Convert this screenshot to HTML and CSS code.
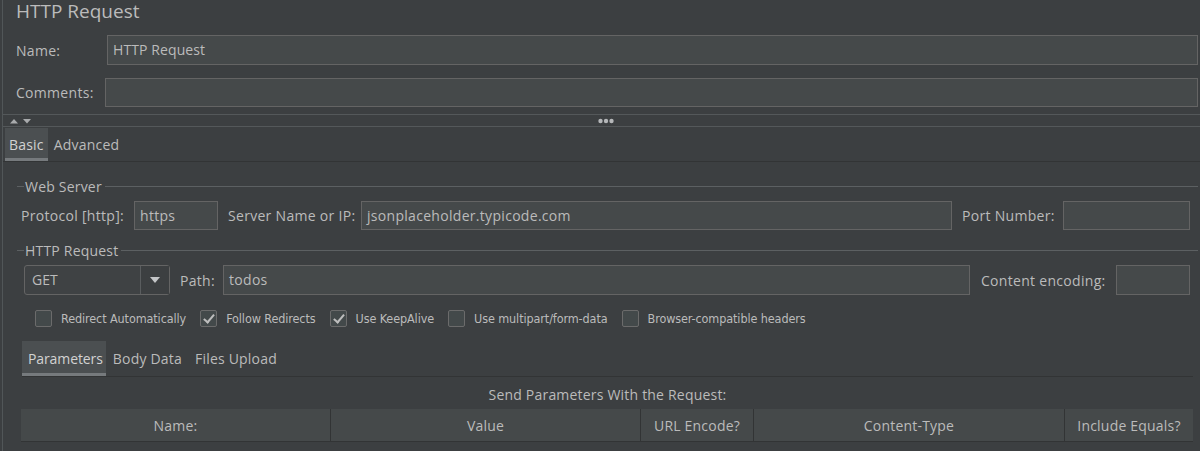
FILE: index.html
```html
<!DOCTYPE html>
<html>
    <head>
        <link rel="stylesheet" href="styles.css">
    </head>
    <body>
        <div class="panel">
            <div class="title">HTTP Request</div>
            <div class="row name-row">
                <label class="lbl name-lbl">Name:</label>
                <div class="field grow">HTTP Request</div>
            </div>
            <div class="row comments-row">
                <label class="lbl comments-lbl">Comments:</label>
                <div class="field grow"></div>
            </div>
            <div class="splitter">
                <span class="arrows">
                    <svg width="24" height="8" viewBox="0 0 24 8">
                        <polygon points="1,6.5 5,2 9,6.5" fill="#a9abad"/>
                        <polygon points="14,2 22,2 18,6.5" fill="#a9abad"/>
                    </svg>
                </span>
                <span class="dots">
                    <svg width="16" height="6" viewBox="0 0 16 6">
                        <circle cx="2.5" cy="3" r="2.2" fill="#b5b7b9"/>
                        <circle cx="8" cy="3" r="2.2" fill="#b5b7b9"/>
                        <circle cx="13.5" cy="3" r="2.2" fill="#b5b7b9"/>
                    </svg>
                </span>
            </div>
            <div class="tabs main-tabs">
                <div class="tab selected">Basic</div>
                <div class="tab">Advanced</div>
            </div>

            <div class="section web-server">
                <div class="legend"><span>Web Server</span></div>
                <div class="row">
                    <label class="lbl protocol-lbl">Protocol [http]:</label>
                    <div class="field protocol">https</div>
                    <label class="lbl server-lbl">Server Name or IP:</label>
                    <div class="field grow">jsonplaceholder.typicode.com</div>
                    <label class="lbl port-lbl">Port Number:</label>
                    <div class="field port"></div>
                </div>
            </div>

            <div class="section http-request">
                <div class="legend"><span>HTTP Request</span></div>
                <div class="row">
                    <div class="combo">
                        <span class="combo-value">GET</span>
                        <span class="combo-btn">
                            <svg width="10" height="6" viewBox="0 0 10 6">
                                <polygon points="0,0 10,0 5,6" fill="#c4c6c8"/>
                            </svg>
                        </span>
                    </div>
                    <label class="lbl path-lbl">Path:</label>
                    <div class="field grow">todos</div>
                    <label class="lbl enc-lbl">Content encoding:</label>
                    <div class="field encoding"></div>
                </div>
                <div class="checks">
                    <span class="check"><span class="box"></span>Redirect Automatically</span>
                    <span class="check"><span class="box checked"></span>Follow Redirects</span>
                    <span class="check"><span class="box checked"></span>Use KeepAlive</span>
                    <span class="check"><span class="box"></span>Use multipart/form-data</span>
                    <span class="check"><span class="box"></span>Browser-compatible headers</span>
                </div>
            </div>

            <div class="params">
                <div class="tabs sub-tabs">
                    <div class="tab selected">Parameters</div>
                    <div class="tab">Body Data</div>
                    <div class="tab">Files Upload</div>
                </div>
                <div class="caption">Send Parameters With the Request:</div>
                <div class="table-head">
                    <div class="col c-name">Name:</div>
                    <div class="col c-value">Value</div>
                    <div class="col c-url">URL Encode?</div>
                    <div class="col c-type">Content-Type</div>
                    <div class="col c-eq">Include Equals?</div>
                </div>
            </div>
        </div>
    </body>
</html>
```

FILE: styles.css
```css
html, body {
    margin: 0;
    height: 100%;
}
body {
    background-color: #3c3f41;
    color: #bbbbbb;
    font-family: "Open Sans", "Noto Sans", sans-serif;
    font-size: 14px;
    overflow: hidden;
}
.panel {
    margin-left: 2px;
    border-left: 1px solid #515658;
    height: 100%;
    box-sizing: border-box;
}
.title {
    font-size: 19px;
    height: 25px;
    line-height: 23px;
    padding-left: 13px;
}
.row {
    display: flex;
    align-items: center;
}
.name-row {
    margin-top: 10px;
    padding-left: 13px;
    padding-right: 2px;
}
.comments-row {
    margin-top: 13px;
    padding-left: 13px;
    padding-right: 2px;
}
.name-lbl {
    width: 91px;
}
.comments-lbl {
    width: 89px;
}
.field {
    height: 28px;
    background-color: #45494a;
    border: 1px solid #646464;
    line-height: 28px;
    padding: 0 5px;
    font-size: 14px;
    letter-spacing: 0.3px;
    color: #bbbbbb;
    white-space: nowrap;
    box-sizing: content-box;
}
.name-row .field {
    letter-spacing: 0.1px;
}
.comments-row .field {
    height: 27px;
}
.grow {
    flex: 1;
}
.splitter {
    margin-top: 7px;
    height: 11px;
    border-top: 1px solid #54585a;
    border-bottom: 1px solid #54585a;
    position: relative;
    display: flex;
    align-items: center;
}
.arrows {
    margin-left: 6px;
    display: flex;
}
.dots {
    position: absolute;
    left: 595px;
    top: 3px;
    display: flex;
}
.tabs {
    display: flex;
    border-bottom: 1px solid #323435;
}
.tab {
    padding: 0 4px;
    font-size: 14px;
    margin-right: 2px;
    box-sizing: border-box;
}
.tab.selected {
    background-color: #4b4f51;
    color: #d2d2d2;
    border-bottom: 3px solid #767a7d;
}
.main-tabs {
    margin-top: 1px;
    padding-left: 2px;
}
.main-tabs .tab {
    height: 33px;
    line-height: 33px;
    letter-spacing: 0.2px;
}
.main-tabs .tab.selected {
    line-height: 30px;
    padding-top: 2px;
}
.section {
    padding-left: 14px;
    padding-right: 2px;
}
.legend {
    display: flex;
    align-items: center;
    height: 16px;
    font-size: 14px;
    letter-spacing: 0.2px;
}
.legend::before {
    content: "";
    width: 7px;
    border-top: 1px solid #5c6062;
}
.legend::after {
    content: "";
    flex: 1;
    border-top: 1px solid #5c6062;
}
.legend span {
    padding: 0 3px 0 1px;
}
.web-server {
    margin-top: 16px;
}
.web-server .row {
    margin-top: 7px;
    padding-left: 4px;
    padding-right: 8px;
}
.lbl {
    font-size: 14px;
    letter-spacing: 0.3px;
    white-space: nowrap;
    flex: none;
}
.web-server .field {
    height: 27px;
    line-height: 27px;
}
.protocol-lbl {
    width: 113px;
}
.protocol {
    width: 72px;
    flex: none;
}
.server-lbl {
    margin-left: 10px;
    width: 133px;
}
.port-lbl {
    margin-left: 10px;
    width: 101px;
}
.port {
    width: 115px;
    flex: none;
}
.http-request {
    margin-top: 12px;
}
.http-request .row {
    margin-top: 7px;
    padding-left: 7px;
    padding-right: 8px;
}
.combo {
    width: 144px;
    height: 28px;
    border: 1px solid #646464;
    border-radius: 3px;
    background-color: #3f4244;
    display: flex;
    flex: none;
}
.combo-value {
    flex: 1;
    line-height: 28px;
    padding-left: 7px;
    font-size: 14px;
    border-right: 1px solid #5a5d5f;
}
.combo-btn {
    width: 28px;
    display: flex;
    align-items: center;
    justify-content: center;
    background-color: #3c3f41;
}
.path-lbl {
    margin-left: 10px;
    width: 43px;
}
.enc-lbl {
    margin-left: 11px;
    width: 135px;
}
.encoding {
    width: 62px;
    flex: none;
}
.checks {
    display: flex;
    margin-top: 15px;
    padding-left: 18px;
    font-family: "DejaVu Sans Condensed", "DejaVu Sans", sans-serif;
    font-size: 12.5px;
    letter-spacing: -0.1px;
}
.check {
    display: flex;
    align-items: center;
    margin-right: 14px;
}
.box {
    width: 15px;
    height: 15px;
    border: 1px solid #6b6b6b;
    border-radius: 2px;
    background-color: #43494a;
    margin-right: 9px;
    position: relative;
}
.box.checked::after {
    content: "";
    position: absolute;
    left: 5px;
    top: 1px;
    width: 4px;
    height: 9px;
    border-right: 2px solid #bdbdbd;
    border-bottom: 2px solid #bdbdbd;
    transform: rotate(40deg);
}
.params {
    margin-top: 14px;
    padding-left: 19px;
    padding-right: 7px;
}
.sub-tabs .tab {
    height: 35px;
    line-height: 35px;
    padding: 0 6px;
    margin-right: 1px;
    letter-spacing: 0.2px;
}
.sub-tabs .tab.selected {
    line-height: 33px;
    padding-top: 1px;
    padding-right: 3px;
    letter-spacing: -0.1px;
}
.caption {
    text-align: center;
    font-size: 14px;
    letter-spacing: 0.2px;
    margin-top: 7px;
    height: 25px;
    line-height: 22px;
}
.table-head {
    display: flex;
    height: 32px;
    margin-left: -1px;
    border-bottom: 1px solid #323435;
}
.col {
    background-color: #45494a;
    text-align: center;
    line-height: 34px;
    font-size: 14px;
    letter-spacing: 0.2px;
    border-right: 1px solid #323435;
}
.c-name { width: 309px; }
.c-value { width: 309px; }
.c-url { width: 112px; }
.c-type { width: 310px; }
.c-eq { flex: 1; border-right: none; }
```
